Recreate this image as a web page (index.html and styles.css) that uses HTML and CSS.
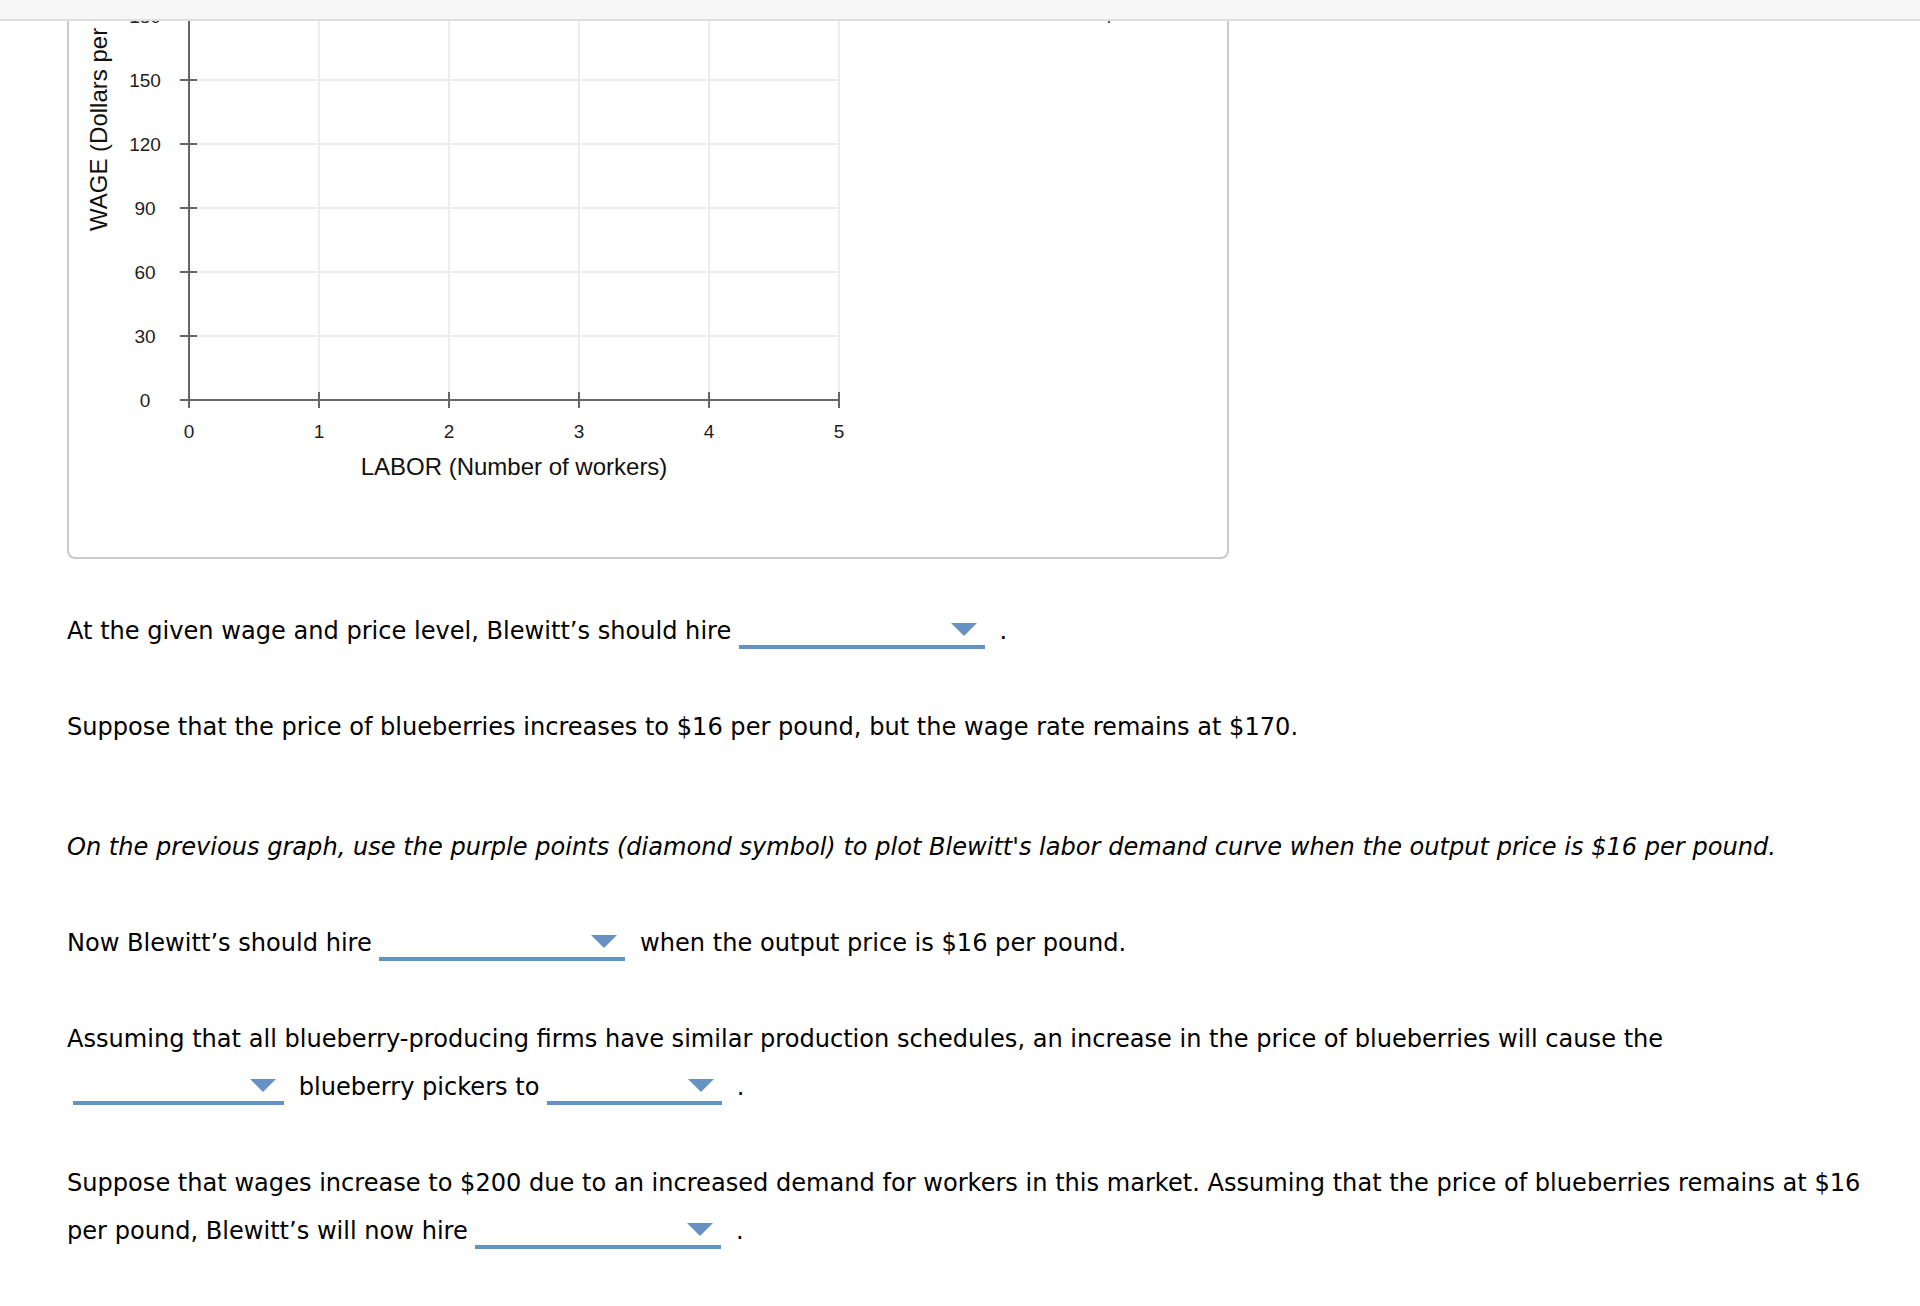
FILE: index.html
```html
<!DOCTYPE html>
<html lang="en">
<head>
<meta charset="utf-8">
<title>Labor demand – Blewitt’s</title>
<link rel="stylesheet" href="styles.css">
</head>
<body>
<header class="topbar"></header>

<main class="content">
  <div class="graph-panel">
    <svg class="plot" viewBox="69 -198 1158 755" width="1158" height="755" xmlns="http://www.w3.org/2000/svg">
      <!-- grid -->
      <g class="grid">
        <line x1="189" y1="16" x2="839" y2="16"/>
        <line x1="189" y1="80" x2="839" y2="80"/>
        <line x1="189" y1="144" x2="839" y2="144"/>
        <line x1="189" y1="208" x2="839" y2="208"/>
        <line x1="189" y1="272" x2="839" y2="272"/>
        <line x1="189" y1="336" x2="839" y2="336"/>
        <line x1="319" y1="16" x2="319" y2="400"/>
        <line x1="449" y1="16" x2="449" y2="400"/>
        <line x1="579" y1="16" x2="579" y2="400"/>
        <line x1="709" y1="16" x2="709" y2="400"/>
        <line x1="839" y1="16" x2="839" y2="400"/>
      </g>
      <!-- axes and ticks -->
      <g class="axis">
        <line x1="189" y1="16" x2="189" y2="401"/>
        <line x1="180" y1="400" x2="840" y2="400"/>
        <line x1="180" y1="16" x2="197" y2="16"/>
        <line x1="180" y1="80" x2="197" y2="80"/>
        <line x1="180" y1="144" x2="197" y2="144"/>
        <line x1="180" y1="208" x2="197" y2="208"/>
        <line x1="180" y1="272" x2="197" y2="272"/>
        <line x1="180" y1="336" x2="197" y2="336"/>
        <line x1="189" y1="392" x2="189" y2="408"/>
        <line x1="319" y1="392" x2="319" y2="408"/>
        <line x1="449" y1="392" x2="449" y2="408"/>
        <line x1="579" y1="392" x2="579" y2="408"/>
        <line x1="709" y1="392" x2="709" y2="408"/>
        <line x1="839" y1="392" x2="839" y2="408"/>
      </g>
      <!-- y tick labels -->
      <g class="tick-label">
        <text x="145" y="23">180</text>
        <text x="145" y="87">150</text>
        <text x="145" y="151">120</text>
        <text x="145" y="215">90</text>
        <text x="145" y="279">60</text>
        <text x="145" y="343">30</text>
        <text x="145" y="407">0</text>
      </g>
      <!-- x tick labels -->
      <g class="tick-label">
        <text x="189" y="438">0</text>
        <text x="319" y="438">1</text>
        <text x="449" y="438">2</text>
        <text x="579" y="438">3</text>
        <text x="709" y="438">4</text>
        <text x="839" y="438">5</text>
      </g>
      <text class="axis-title axis-title-x" x="514" y="475">LABOR (Number of workers)</text>
      <text class="axis-title" x="107" y="231" transform="rotate(-90 107 231)">WAGE (Dollars per worker)</text>
      <!-- legend marker foot -->
      <rect class="legend-foot" x="1108" y="21" width="2" height="2"/>
    </svg>
  </div>

  <p class="q">At the given wage and price level, Blewitt’s should hire <span class="dd"><span class="dd-caret"></span></span> .</p>

  <p class="q">Suppose that the price of blueberries increases to $16 per pound, but the wage rate remains at $170.</p>

  <p class="q q-instruction">On the previous graph, use the purple points (diamond symbol) to plot Blewitt's labor demand curve when the output price is $16 per pound.</p>

  <p class="q">Now Blewitt’s should hire <span class="dd"><span class="dd-caret"></span></span> when the output price is $16 per pound.</p>

  <p class="q">Assuming that all blueberry-producing firms have similar production schedules, an increase in the price of blueberries will cause the <span class="dd dd-mid dd-lead"><span class="dd-caret"></span></span> blueberry pickers to <span class="dd dd-short"><span class="dd-caret"></span></span> .</p>

  <p class="q">Suppose that wages increase to $200 due to an increased demand for workers in this market. Assuming that the price of blueberries remains at $16 per pound, Blewitt’s will now hire <span class="dd"><span class="dd-caret"></span></span> .</p>
</main>
</body>
</html>
```

FILE: styles.css
```css
html, body {
  margin: 0;
  padding: 0;
  background: #ffffff;
}

body {
  font-family: "DejaVu Sans", Verdana, sans-serif;
  font-size: 24.08px;
  color: #000000;
}

/* toolbar strip pinned over the scrolled page */
.topbar {
  position: fixed;
  top: 0;
  left: 0;
  right: 0;
  height: 19px;
  background: #f6f6f6;
  border-bottom: 2px solid #dedede;
  z-index: 10;
}

.content {
  padding-left: 67px;
  width: 1808px;
}

.graph-panel {
  box-sizing: border-box;
  width: 1162px;
  height: 759px;
  margin-top: -200px;
  margin-bottom: 48px;
  border: 2px solid #cbcbcb;
  border-radius: 8px;
  overflow: hidden;
}

.plot {
  display: block;
}

.grid line {
  stroke: #ededed;
  stroke-width: 2;
}

.axis line {
  stroke: #666666;
  stroke-width: 2;
}

.tick-label text {
  font-family: "Liberation Sans", Arial, sans-serif;
  font-size: 19px;
  fill: #1e1e1e;
  text-anchor: middle;
}

.axis-title {
  font-family: "Liberation Sans", Arial, sans-serif;
  font-size: 24px;
  fill: #111111;
}

.axis-title-x {
  text-anchor: middle;
}

.legend-foot {
  fill: #555555;
}

/* question text */
.q {
  margin: 0 0 48px;
  line-height: 48px;
}

.q-instruction {
  margin-top: 72px;
  font-style: italic;
}

/* dropdown answer slot */
.dd {
  display: inline-block;
  box-sizing: border-box;
  width: 246px;
  line-height: 24px;
  padding-bottom: 2px;
  border-bottom: 4px solid #6592c3;
  margin-right: 7px;
  text-align: right;
  vertical-align: baseline;
}

.dd-mid {
  width: 211px;
}

.dd-short {
  width: 175px;
}

.dd-lead {
  margin-left: 6px;
}

.dd-caret {
  display: inline-block;
  width: 0;
  height: 0;
  border-left: 13.5px solid transparent;
  border-right: 13.5px solid transparent;
  border-top: 13px solid #6592c3;
  margin-right: 8px;
  margin-bottom: 3px;
  vertical-align: baseline;
}
```
